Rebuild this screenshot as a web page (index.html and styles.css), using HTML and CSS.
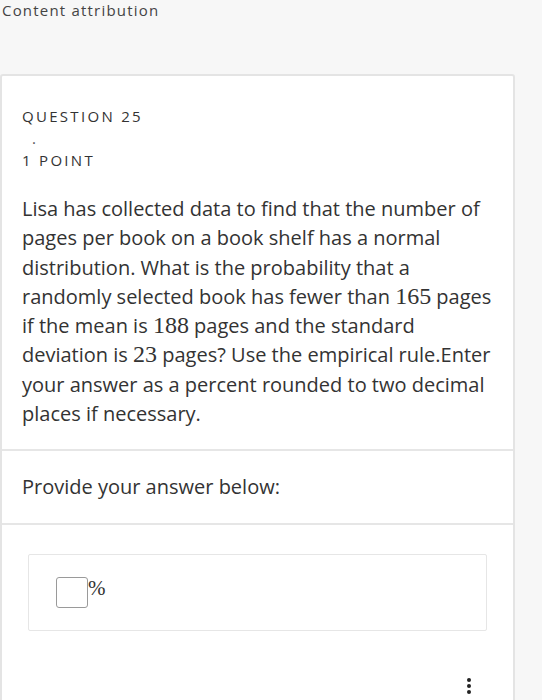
FILE: index.html
```html
<!DOCTYPE html>
<html lang="en">
<head>
  <meta charset="UTF-8">
  <meta name="viewport" content="width=device-width, initial-scale=1.0">
  <title>Question 25</title>
  <link rel="stylesheet" href="styles.css">
</head>
<body>
  <div class="attribution">Content attribution</div>

  <div class="card">
    <div class="card-head">
      <div class="question-title">QUESTION 25</div>
      <div class="dot">.</div>
      <div class="points">1 POINT</div>
      <p class="question-text">
        Lisa has collected data to find that the number of pages per book on a book shelf has a normal
        distribution. What is the probability that a randomly selected book has fewer than <span class="num">165</span> pages
        if the mean is <span class="num">188</span> pages and the standard deviation is <span class="num">23</span> pages? Use the empirical rule.Enter
        your answer as a percent rounded to two decimal places if necessary.
      </p>
    </div>

    <div class="prompt">Provide your answer below:</div>

    <div class="answer-area">
      <div class="answer-box">
        <input type="text" class="answer-input">
        <span class="percent">%</span>
      </div>
      <div class="kebab">
        <span></span><span></span><span></span>
      </div>
    </div>
  </div>
</body>
</html>
```

FILE: styles.css
```css
body {
  margin: 0;
  background: #f7f7f7;
  font-family: 'Open Sans', sans-serif;
  color: #333;
  overflow: hidden;
}

.attribution {
  padding: 1px 0 0 2px;
  font-size: 15px;
  line-height: 19px;
  letter-spacing: 1.2px;
  color: #444;
}

.card {
  margin-top: 54px;
  width: 511px;
  background: #fff;
  border: 2px solid #e4e4e4;
  border-radius: 3px;
  min-height: 700px;
}

.card-head {
  padding: 29px 20px 0 20px;
  border-bottom: 2px solid #e6e6e6;
}

.question-title,
.points {
  font-size: 15px;
  line-height: 22px;
  letter-spacing: 2.3px;
  color: #333;
}

.dot {
  padding-left: 10px;
  font-size: 15px;
  line-height: 22px;
  color: #555;
}

.question-text {
  margin: 23px 0 0 0;
  padding-bottom: 21px;
  font-size: 20px;
  line-height: 29.3px;
  color: #333;
}

.num {
  font-family: 'Liberation Serif', serif;
  font-size: 24px;
  line-height: 0;
}

.prompt {
  padding: 22px 20px 22px 20px;
  font-size: 20px;
  line-height: 28px;
  color: #333;
  border-bottom: 2px solid #e6e6e6;
}

.answer-area {
  padding: 29px 26px 0 26px;
}

.answer-box {
  display: flex;
  align-items: flex-start;
  height: 75px;
  padding: 0 0 0 27px;
  border: 1px solid #e6e6e6;
  border-radius: 2px;
}

.answer-input {
  box-sizing: border-box;
  width: 32px;
  height: 31px;
  margin: 22px 0 0 0;
  padding: 0;
  border: 1px solid #9a9a9a;
  border-radius: 3px;
  background: #fff;
}

.percent {
  margin-top: 21px;
  font-family: 'Liberation Serif', serif;
  font-size: 21px;
  color: #333;
}

.kebab {
  display: flex;
  flex-direction: column;
  align-items: flex-end;
  gap: 2px;
  margin-top: 47px;
  padding-right: 16px;
}

.kebab span {
  width: 4px;
  height: 4px;
  border-radius: 50%;
  background: #222;
}
```
